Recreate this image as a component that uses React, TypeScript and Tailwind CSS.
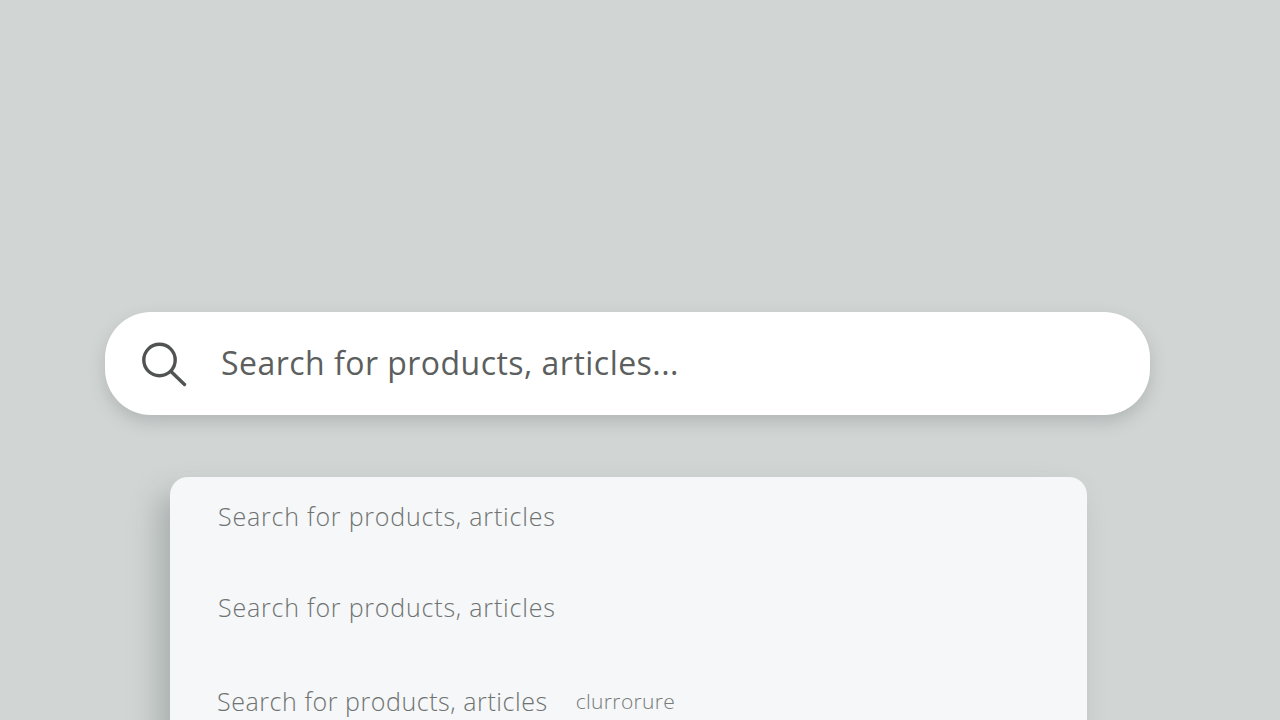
export default function App() {
  const font = "font-['Open_Sans','Noto_Sans',sans-serif]";
  return (
    <div className={`h-[720px] w-[1280px] overflow-hidden bg-[#d1d5d4] pt-[312px] pl-[105px] ${font}`}>
      <div className="flex h-[103px] w-[1045px] items-center rounded-[46px] bg-white pl-[35px] shadow-[0_7px_16px_rgba(110,120,118,0.3)]">
        <svg width="48" height="48" viewBox="0 0 48 48" fill="none" stroke="#505352" strokeWidth="3.4" strokeLinecap="round" className="shrink-0">
          <circle cx="19.5" cy="20" r="15.7" />
          <path d="M31 31.5 L44.5 44.5" />
        </svg>
        <span className="ml-[33px] -translate-y-px text-[32px] leading-none tracking-[0.47px] text-[#5c5f5e]">Search for products, articles...</span>
      </div>
      <div className="mt-[62px] ml-[65px] h-[300px] w-[917px] rounded-[18px] bg-[#f5f7f8] pl-[48px] shadow-[-12px_16px_28px_rgba(100,110,108,0.36)]">
        <div className="flex h-[80px] items-center text-[25px] font-light tracking-[0.8px] text-[#6f7271]">Search for products, articles</div>
        <div className="mt-[11px] flex h-[80px] items-center text-[25px] font-light tracking-[0.8px] text-[#6f7271]">Search for products, articles</div>
        <div className="mt-[14px] flex h-[80px] items-center text-[25px] font-light tracking-[0.56px] text-[#6f7271]">
          <span className="-ml-px">Search for products, articles</span>
          <span className="ml-[28px] text-[21px] tracking-[0.35px] text-[#777a79]">clurrorure</span>
        </div>
      </div>
    </div>
  );
}
